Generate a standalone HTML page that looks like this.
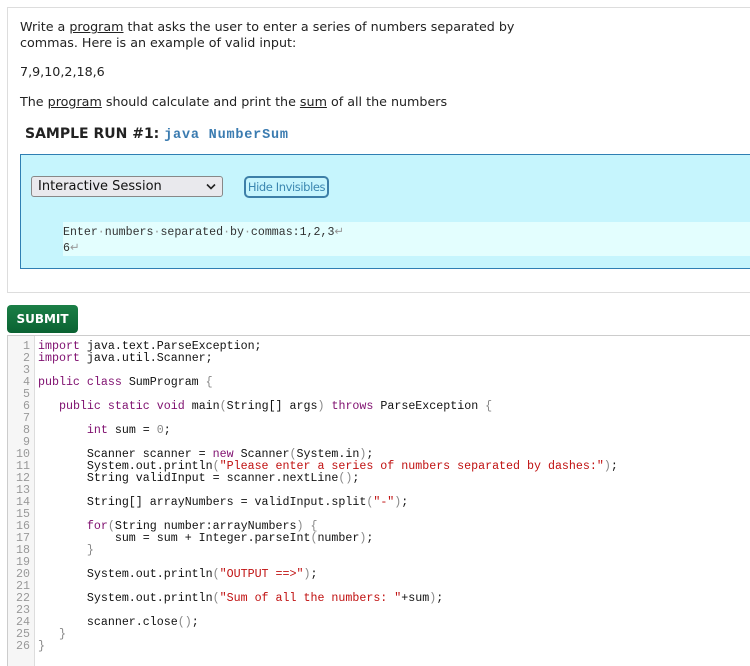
<!DOCTYPE html>
<html><head><meta charset="utf-8"><style>
body{margin:0;width:750px;height:662px;overflow:hidden;background:#fff;font-family:"DejaVu Sans","Liberation Sans",sans-serif;position:relative}
.abs{position:absolute}
.p{font-size:12.7px;color:#222;white-space:nowrap}
u{text-decoration:underline}
#outer{left:7px;top:7px;width:760px;height:284px;border:1px solid #ddd;border-right:none}
#cyan{left:20px;top:154px;width:740px;height:113px;background:#c6f5fd;border-top:1px solid #2f7fb3;border-bottom:1px solid #2f7fb3;border-left:1px solid #2f7fb3}
#band{left:63px;top:222px;width:700px;height:34px;background:#e3fefe}
.mono{font-family:"Liberation Mono",monospace}
#code{left:7px;top:335px;width:760px;height:330px;border-top:1px solid #ccc}
#gut{left:7px;top:336px;width:26px;height:330px;background:#f6f6f6;border-left:1px solid #ccc;border-right:1px solid #ddd}
pre{margin:0;font-family:"Liberation Mono",monospace;font-size:11.65px;line-height:12px}
.k{color:#7f0f6f}.s{color:#c01010}.n{color:#999}.g{color:#888}
</style></head><body>
<div id="outer" class="abs"></div>
<div class="abs p" style="left:20px;top:19px;line-height:16px">Write a <u>program</u> that asks the user to enter a series of numbers separated by<br>commas. Here is an example of valid input:</div>
<div class="abs p" style="left:20px;top:64px">7,9,10,2,18,6</div>
<div class="abs p" style="left:20px;top:94px">The <u>program</u> should calculate and print the <u>sum</u> of all the numbers</div>
<div class="abs" style="left:25px;top:126px;font-weight:bold;font-size:14px;color:#222">SAMPLE RUN #1: <span class="mono" style="color:#3a7bb0;font-size:13.5px;font-weight:bold;letter-spacing:0.8px">java NumberSum</span></div>
<div id="cyan" class="abs"></div>
<div class="abs" style="left:31px;top:176px;width:190px;height:19px;border:1px solid #888;border-radius:3px;background:#e9e9ed;font-size:13px;line-height:19px;color:#111"><span style="margin-left:6px">Interactive Session</span><svg class="abs" style="right:6px;top:6px" width="10" height="7" viewBox="0 0 10 7"><path d="M1 1.5L5 5.5L9 1.5" fill="none" stroke="#222" stroke-width="1.6"/></svg></div>
<div class="abs" style="left:244px;top:176px;width:81px;height:18px;border:2px solid #3d7fa8;border-radius:5px;font-size:11.5px;line-height:18px;color:#3a86b0;text-align:center;letter-spacing:-0.4px">Hide Invisibles</div>
<div id="band" class="abs"></div>
<pre class="abs" style="left:63px;top:225px;font-size:11.6px;line-height:16px;color:#333">Enter<span class="n">·</span>numbers<span class="n">·</span>separated<span class="n">·</span>by<span class="n">·</span>commas:1,2,3<span class="n">↵</span>
6<span class="n">↵</span></pre>
<div class="abs" style="left:7px;top:305px;width:71px;height:28px;border-radius:4px;background:linear-gradient(#1b7f46,#0a6232);color:#fff;font-weight:bold;font-size:12px;line-height:28px;text-align:center">SUBMIT</div>
<div id="code" class="abs"></div>
<div id="gut" class="abs"></div>
<pre class="abs g" style="left:10px;top:341px;width:20px;text-align:right;color:#999">1
2
3
4
5
6
7
8
9
10
11
12
13
14
15
16
17
18
19
20
21
22
23
24
25
26</pre>
<pre class="abs" style="left:38px;top:341px;color:#111"><span class="k">import</span> java.text.ParseException;
<span class="k">import</span> java.util.Scanner;

<span class="k">public class</span> SumProgram <span class="g">{</span>

   <span class="k">public static void</span> main<span class="g">(</span>String[] args<span class="g">)</span> <span class="k">throws</span> ParseException <span class="g">{</span>

       <span class="k">int</span> sum = <span class="g">0</span>;

       Scanner scanner = <span class="k">new</span> Scanner<span class="g">(</span>System.in<span class="g">)</span>;
       System.out.println<span class="g">(</span><span class="s">"Please enter a series of numbers separated by dashes:"</span><span class="g">)</span>;
       String validInput = scanner.nextLine<span class="g">()</span>;

       String[] arrayNumbers = validInput.split<span class="g">(</span><span class="s">"-"</span><span class="g">)</span>;

       <span class="k">for</span><span class="g">(</span>String number:arrayNumbers<span class="g">)</span> <span class="g">{</span>
           sum = sum + Integer.parseInt<span class="g">(</span>number<span class="g">)</span>;
       <span class="g">}</span>

       System.out.println<span class="g">(</span><span class="s">"OUTPUT ==&gt;"</span><span class="g">)</span>;

       System.out.println<span class="g">(</span><span class="s">"Sum of all the numbers: "</span>+sum<span class="g">)</span>;

       scanner.close<span class="g">()</span>;
   <span class="g">}</span>
<span class="g">}</span></pre>
</body></html>
